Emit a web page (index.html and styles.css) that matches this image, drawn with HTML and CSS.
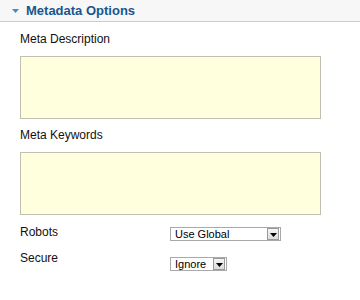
FILE: index.html
```html
<!DOCTYPE html>
<html>
<head>
<meta charset="utf-8">
<link rel="stylesheet" href="styles.css">
</head>
<body>
<div class="panel">
  <div class="panel-head">
    <svg class="arrow" width="7" height="4" viewBox="0 0 7 4"><polygon points="0,0 7,0 3.5,4" fill="#3b8fca"/></svg>
    <span class="title">Metadata Options</span>
  </div>
  <div class="panel-body">
    <div class="label">Meta Description</div>
    <div class="area"></div>
    <div class="label second">Meta Keywords</div>
    <div class="area"></div>
    <div class="row first-row">
      <div class="row-label">Robots</div>
      <div class="fake-select wide">
        <span class="sel-text">Use Global</span>
        <span class="sel-btn"><svg width="7" height="4" viewBox="0 0 7 4"><polygon points="0,0 7,0 3.5,4" fill="#000"/></svg></span>
      </div>
    </div>
    <div class="row second-row">
      <div class="row-label">Secure</div>
      <div class="fake-select narrow">
        <span class="sel-text">Ignore</span>
        <span class="sel-btn"><svg width="7" height="4" viewBox="0 0 7 4"><polygon points="0,0 7,0 3.5,4" fill="#000"/></svg></span>
      </div>
    </div>
  </div>
</div>
</body>
</html>
```
FILE: styles.css
```css
html, body {
  margin: 0;
  padding: 0;
  background: #ffffff;
}
body {
  font-family: "Liberation Sans", Arial, sans-serif;
  width: 360px;
  height: 300px;
  overflow: hidden;
}
.panel-head {
  height: 21px;
  background: #f7f7f7;
  border-bottom: 1px solid #cccccc;
  display: flex;
  align-items: center;
  padding-left: 12px;
  box-sizing: content-box;
}
.arrow {
  display: block;
  margin-right: 7px;
  margin-top: 1px;
}
.title {
  font-size: 13px;
  font-weight: bold;
  color: #18568f;
  line-height: 21px;
}
.panel-body {
  padding-left: 20px;
}
.label {
  font-size: 12px;
  line-height: 14px;
  color: #111111;
  margin-top: 10px;
  margin-bottom: 10px;
}
.label.second {
  margin-top: 9px;
}
.area {
  width: 299px;
  height: 61px;
  border: 1px solid #c2bfb2;
  background: #ffffdd;
}
.row {
  display: flex;
  align-items: flex-start;
  height: 14px;
}
.first-row {
  margin-top: 12px;
}
.second-row {
  margin-top: 16px;
}
.row-label {
  width: 150px;
  font-size: 12px;
  line-height: 14px;
  color: #111111;
}
.first-row .row-label {
  margin-top: -2px;
}
.second-row .row-label {
  margin-top: -6px;
}
.fake-select {
  display: flex;
  align-items: center;
  justify-content: space-between;
  height: 12px;
  border: 1px solid #a9a9a9;
  background: #ffffff;
  padding: 0 1px 0 4px;
}
.fake-select.wide {
  width: 104px;
}
.fake-select.narrow {
  width: 50px;
}
.sel-text {
  font-family: "Liberation Sans", Arial, sans-serif;
  font-size: 11px;
  line-height: 12px;
  color: #000000;
}
.sel-btn {
  width: 10px;
  height: 10px;
  border: 1px solid #9a9a9a;
  background: linear-gradient(#f4f4f4, #dcdcdc);
  display: flex;
  align-items: center;
  justify-content: center;
}
.sel-btn svg {
  display: block;
  margin-top: 1px;
}
```
